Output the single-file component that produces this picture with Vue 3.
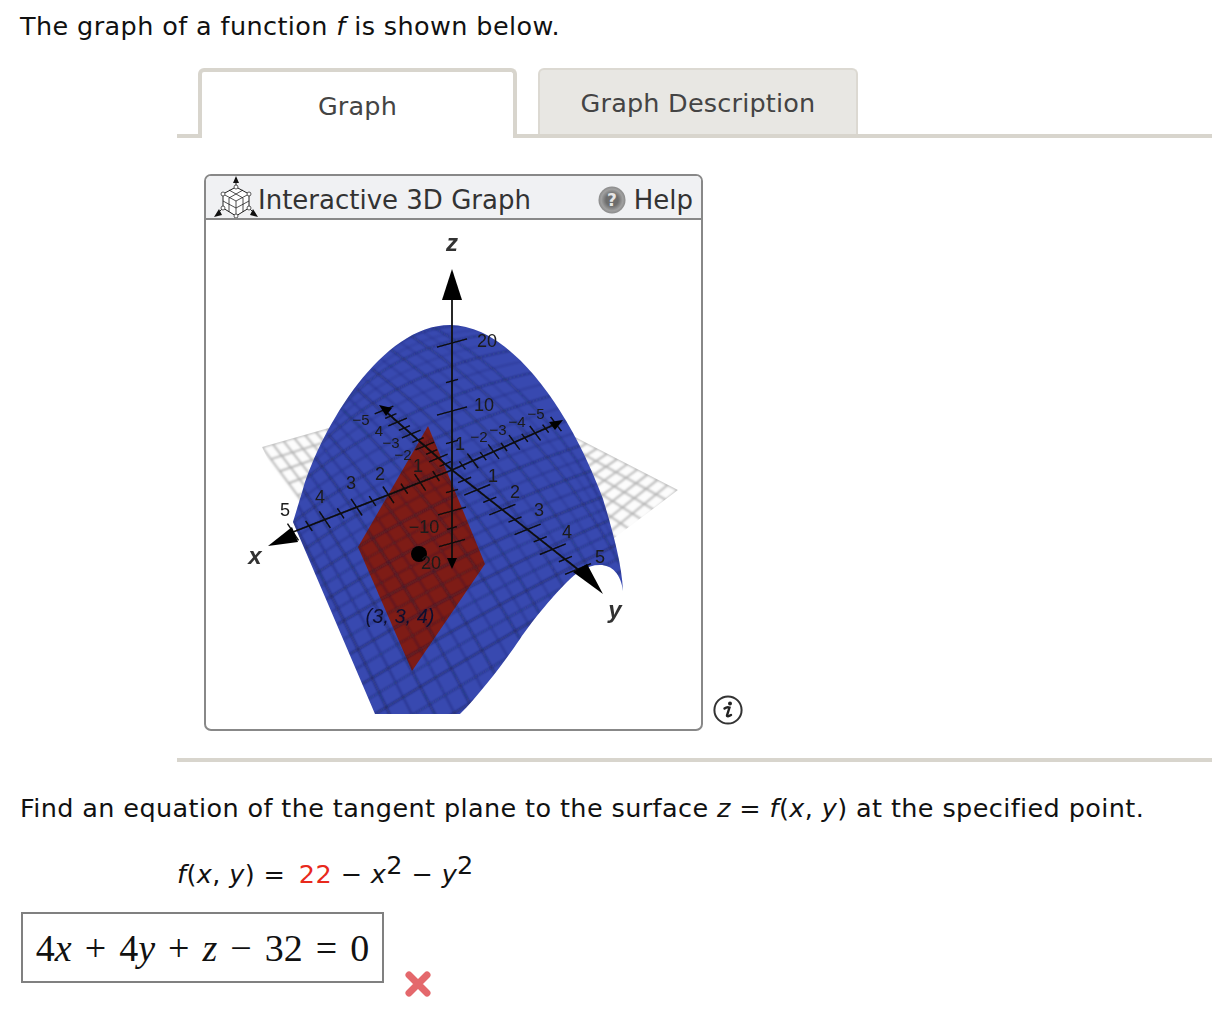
<script setup>
// hand-fitted mesh: each line is a quadratic from one contour point to another
const risingStarts = [[350, 395], [335, 415], [320, 445], [305, 480], [293, 523], [305, 550], [315, 575], [327, 600], [338, 625], [350, 655], [362, 685], [375, 715], [395, 750]]
const risingEnds = [[470, 326], [495, 335], [520, 350], [540, 372], [557, 395], [572, 420], [585, 445], [596, 470], [605, 497], [612, 520], [618, 545], [622, 572], [625, 610]]
const fallingStarts = [[430, 326], [410, 336], [390, 350], [372, 370], [357, 390], [342, 410], [328, 435], [315, 458], [303, 490], [293, 523], [270, 530]]
const fallingEnds = [[612, 525], [620, 565], [590, 572], [565, 590], [540, 615], [520, 640], [495, 675], [470, 705], [445, 735], [415, 770], [375, 760]]

function curve(a, b, bx, by) {
  const cx = (a[0] + b[0]) / 2 + bx
  const cy = (a[1] + b[1]) / 2 + by
  return `M${a[0]} ${a[1]} Q${cx} ${cy} ${b[0]} ${b[1]}`
}

// put a second line halfway between each pair
function densify(points) {
  const out = []
  points.forEach((p, i) => {
    out.push(p)
    const next = points[i + 1]
    if (next) out.push([(p[0] + next[0]) / 2, (p[1] + next[1]) / 2])
  })
  return out
}

function family(starts, ends, bx, by) {
  const a = densify(starts)
  const b = densify(ends)
  return a.map((p, i) => {
    const n = i / (a.length - 1)
    const strong = i % 2 === 0 ? 0.36 : 0.14
    return { d: curve(p, b[i], bx * (1 - n), by * (1 - n)), o: strong + 0.22 * n }
  })
}

const surfaceGrid = [
  ...family(risingStarts, risingEnds, -22, -34),
  ...family(fallingStarts, fallingEnds, 34, -26),
]

// base plane, interpolated between its four corners
const corners = [[262, 448], [476, 387], [678, 491], [440, 690]]
function planePoint(u, v) {
  const [a, b, c, d] = corners
  return [0, 1].map(k =>
    (1 - u) * (1 - v) * a[k] + u * (1 - v) * b[k] + u * v * c[k] + (1 - u) * v * d[k]
  )
}
const planeGrid = []
for (let i = 0; i <= 20; i++) {
  const s = i / 20
  planeGrid.push([planePoint(s, 0), planePoint(s, 1)])
  planeGrid.push([planePoint(0, s), planePoint(1, s)])
}

function ticks(from, to, count, dir, major, minor) {
  const out = []
  for (let i = 1; i <= count; i++) {
    const s = i / count
    const px = from[0] + (to[0] - from[0]) * s
    const py = from[1] + (to[1] - from[1]) * s
    const len = i % 2 === 0 ? major : minor
    out.push({ x1: px - dir[0] * len, y1: py - dir[1] * len, x2: px + dir[0] * len, y2: py + dir[1] * len })
  }
  return out
}

const axisTicks = [
  ...ticks([452, 471], [293, 533], 10, [0.55, 0.83], 10, 6),
  ...ticks([452, 471], [384, 411], 10, [0.93, -0.38], 10, 6),
  ...ticks([452, 471], [556, 425], 10, [0.6, 0.8], 9, 5),
  ...ticks([452, 471], [578, 570], 10, [0.93, -0.38], 14, 7),
]

const zTicks = [
  { y: 344, r: 15 }, { y: 382, r: 6 }, { y: 412, r: 15 }, { y: 443, r: 6 },
  { y: 492, r: 6 }, { y: 512, r: 14 }, { y: 529, r: 5 }, { y: 544, r: 13 },
]

const labels = [
  { t: '5', x: 285, y: 517 }, { t: '4', x: 320, y: 504 }, { t: '3', x: 351, y: 490 },
  { t: '2', x: 380, y: 481 }, { t: '1', x: 418, y: 473 },
  { t: '1', x: 460, y: 451 },
  { t: '1', x: 493, y: 483 }, { t: '2', x: 515, y: 499 }, { t: '3', x: 539, y: 517 }, { t: '4', x: 567, y: 539 }, { t: '5', x: 600, y: 564 },
  { t: '20', x: 487, y: 348 }, { t: '10', x: 484, y: 412 }, { t: '−10', x: 424, y: 534 }, { t: '20', x: 431, y: 570 },
]

// the crowded ends of the negative axes
const tightLabels = [
  { t: '−5', x: 361, y: 426 }, { t: '4', x: 379, y: 437 }, { t: '−3', x: 391, y: 449 }, { t: '−2', x: 403, y: 461 },
  { t: '−2', x: 479, y: 443 }, { t: '−3', x: 498, y: 436 }, { t: '−4', x: 517, y: 428 }, { t: '−5', x: 536, y: 420 },
]
</script>

<template>
  <div class="page">
    <p class="intro">The graph of a function <i>f</i> is shown below.</p>

    <div class="panel">
      <div class="tabs">
        <div class="tab active">Graph</div>
        <div class="tab">Graph Description</div>
      </div>

      <div class="graph-row">
        <div class="graph-box">
          <div class="graph-head">
            <span class="head-title">
              <svg class="cube" viewBox="0 0 44 42" width="44" height="42">
                <g fill="none" stroke="#222" stroke-width="1">
                  <path d="M22 6 L22 11 M9 32 L5 36 M35 32 L39 36" />
                  <path d="M22 11 L35 18 L35 32 L22 40 L9 32 L9 18 Z" fill="#fff" />
                  <path d="M9 18 L22 25 L35 18 M22 25 L22 40 M15 14 L29 22 M29 14 L15 22 M15 22 L15 36 M29 22 L29 36 M9 25 L22 32 L35 25" stroke-width="0.8" />
                </g>
                <path d="M22 0 L25 7 L19 7 Z M0 41 L5 33 L8 39 Z M44 41 L39 33 L36 39 Z" fill="#111" />
                <g fill="#fff" stroke="#333" stroke-width="0.8">
                  <circle cx="22" cy="11" r="2" /><circle cx="9" cy="18" r="2" /><circle cx="35" cy="18" r="2" />
                  <circle cx="9" cy="32" r="2" /><circle cx="35" cy="32" r="2" /><circle cx="22" cy="40" r="2" />
                </g>
              </svg>
              Interactive 3D Graph
            </span>
            <span class="help">
              <svg viewBox="0 0 28 28" width="28" height="28">
                <defs>
                  <radialGradient id="helpFill" cx="0.5" cy="0.5" r="0.5">
                    <stop offset="0.45" stop-color="#6d6d6d" />
                    <stop offset="0.8" stop-color="#a0a0a0" />
                    <stop offset="1" stop-color="#8a8a8a" />
                  </radialGradient>
                </defs>
                <circle cx="14" cy="14" r="13.5" fill="url(#helpFill)" />
                <text x="14" y="20" text-anchor="middle" class="help-mark">?</text>
              </svg>
              Help
            </span>
          </div>

          <svg class="plot" viewBox="206 221 495 509" width="495" height="509">
            <defs>
              <clipPath id="surfaceClip">
                <path id="surfaceEdge" d="M293 523 L303 490 C322 428 382 326 450 326 C510 326 570 410 603 500 C612 530 622 565 623 592 C621 575 612 566 600 566 C586 566 576 574 567 583 C550 600 530 625 520 640 C505 662 480 695 460 715 L375 715 Z" />
              </clipPath>
              <clipPath id="planeClip">
                <polygon points="262,448 476,387 678,491 460,655 300,530" />
              </clipPath>
              <filter id="soft"><feGaussianBlur stdDeviation="0.9" /></filter>
              <filter id="softer"><feGaussianBlur stdDeviation="0.5" /></filter>
            </defs>

            <!-- base plane -->
            <g clip-path="url(#planeClip)">
              <g filter="url(#soft)">
                <polygon points="262,448 476,387 678,491 440,690" fill="#fcfcfc" />
                <line v-for="(l, i) in planeGrid" :key="i" :x1="l[0][0]" :y1="l[0][1]" :x2="l[1][0]" :y2="l[1][1]" stroke="#b4b4b4" stroke-width="2" />
              </g>
            </g>

            <!-- surface and tangent plane -->
            <g filter="url(#softer)">
              <use href="#surfaceEdge" fill="#3949b0" />
              <polygon points="428,427 485,565 412,672 358,548" fill="#7e1d16" />
            </g>
            <g clip-path="url(#surfaceClip)">
              <g filter="url(#soft)">
                <path v-for="(l, i) in surfaceGrid" :key="i" :d="l.d" fill="none" stroke="#141a40" :stroke-opacity="l.o" stroke-width="1.7" />
              </g>
            </g>

            <!-- axes -->
            <g filter="url(#softer)" stroke="#0a0a0a" stroke-width="1.8">
              <line x1="452" y1="298" x2="452" y2="560" />
              <line x1="293" y1="533" x2="452" y2="471" />
              <line x1="452" y1="471" x2="558" y2="424" />
              <line x1="384" y1="411" x2="452" y2="471" />
              <line x1="452" y1="471" x2="580" y2="572" />
              <line v-for="(t, i) in axisTicks" :key="i" :x1="t.x1" :y1="t.y1" :x2="t.x2" :y2="t.y2" stroke-width="1.4" />
              <line v-for="t in zTicks" :key="t.y" :x1="452 - t.r" :y1="t.y + t.r * 0.28" :x2="452 + t.r" :y2="t.y - t.r * 0.28" stroke-width="1.4" />
            </g>
            <g fill="#000" filter="url(#softer)">
              <polygon points="452,270 442,301 462,301" />
              <polygon points="452,570 447,559 457,559" />
              <polygon points="268,547 292,528 298,543" />
              <polygon points="603,595 573,573 587,565" />
              <polygon points="563,421 549,423 555,431" />
              <polygon points="379,406 392,409 386,417" />
              <circle cx="419" cy="555" r="8" />
            </g>

            <!-- labels -->
            <g class="plot-labels" filter="url(#softer)">
              <text v-for="(l, i) in labels" :key="i" :x="l.x" :y="l.y" text-anchor="middle">{{ l.t }}</text>
              <text v-for="(l, i) in tightLabels" :key="'t' + i" :x="l.x" :y="l.y" text-anchor="middle" class="tight">{{ l.t }}</text>
              <text x="400" y="624" text-anchor="middle" class="point-label">(3, 3, 4)</text>
              <text x="452" y="252" text-anchor="middle" class="axis-name">z</text>
              <text x="255" y="565" text-anchor="middle" class="axis-name">x</text>
              <text x="615" y="619" text-anchor="middle" class="axis-name">y</text>
            </g>
          </svg>
        </div>

        <svg class="info" viewBox="0 0 30 30" width="30" height="30">
          <circle cx="15" cy="15" r="13.6" fill="#fff" stroke="#333" stroke-width="2" />
          <circle cx="17" cy="8.6" r="2" fill="#222" />
          <path d="M11.5 13.5 Q14 11.5 16.5 12.5 L14 20.5 Q14 22.5 18 20" fill="none" stroke="#222" stroke-width="2.4" stroke-linecap="round" />
        </svg>
      </div>

      <div class="rule"></div>
    </div>

    <p class="question">Find an equation of the tangent plane to the surface <i>z</i> = <i>f</i>(<i>x</i>, <i>y</i>) at the specified point.</p>

    <p class="formula"><i>f</i>(<i>x</i>, <i>y</i>) = <span class="red">22</span> − <i>x</i><sup>2</sup> − <i>y</i><sup>2</sup></p>

    <div class="answer-row">
      <div class="answer"><span>4<i>x</i><span class="op">+</span>4<i>y</i><span class="op">+</span><i>z</i><span class="op">−</span>32<span class="op">=</span>0</span></div>
      <svg class="wrong" viewBox="0 0 28 28" width="28" height="28">
        <path d="M5 5 L23 23 M23 5 L5 23" stroke="#e4686c" stroke-width="7" stroke-linecap="round" />
      </svg>
    </div>
  </div>
</template>

<style scoped>
.page {
  width: 1212px;
  height: 1018px;
  overflow: hidden;
  box-sizing: border-box;
  padding: 11px 0 0 20px;
  font-family: "DejaVu Sans", Verdana, sans-serif;
  font-size: 25.5px;
  letter-spacing: 0.39px;
  color: #111;
  background: #fff;
}

p {
  margin: 0;
}

.intro {
  line-height: 30px;
}

.panel {
  margin: 27px 0 0 157px;
}

.tabs {
  display: flex;
  align-items: flex-end;
  gap: 21px;
  padding-left: 21px;
  border-bottom: 4px solid #d8d5cd;
  box-sizing: border-box;
  height: 70px;
}

.tab {
  box-sizing: border-box;
  width: 320px;
  height: 66px;
  padding-top: 2px;
  display: flex;
  align-items: center;
  justify-content: center;
  border: 2px solid #dcd9d2;
  border-bottom: 0;
  border-radius: 6px 6px 0 0;
  background: #e8e7e3;
  color: #444;
  letter-spacing: 0.2px;
}

.tab.active {
  width: 319px;
  height: 70px;
  margin-bottom: -4px;
  background: #fff;
  border: 4px solid #d8d5cd;
  border-bottom: 0;
}

.graph-row {
  display: flex;
  align-items: flex-end;
  gap: 10px;
  margin: 36px 0 0 27px;
}

.graph-box {
  box-sizing: border-box;
  width: 499px;
  height: 557px;
  border: 2px solid #888;
  border-radius: 7px;
  overflow: hidden;
}

.graph-head {
  box-sizing: border-box;
  height: 44px;
  padding: 6px 8px 0 8px;
  display: flex;
  align-items: center;
  justify-content: space-between;
  background: #f0f1f3;
  border-bottom: 2px solid #888;
  color: #333;
  font-size: 26px;
  letter-spacing: 0;
}

.head-title {
  display: flex;
  align-items: center;
  white-space: nowrap;
}

.cube {
  flex: none;
  margin-top: -6px;
}

.help {
  display: flex;
  align-items: center;
  gap: 8px;
}

.help-mark {
  font-family: "DejaVu Sans", sans-serif;
  font-size: 17px;
  font-weight: 700;
  fill: #e6e6e6;
}

.plot {
  display: block;
}

.plot-labels text {
  font-family: "Liberation Sans", Arial, sans-serif;
  font-size: 18px;
  letter-spacing: 0;
  fill: #1a1a1a;
}

.plot-labels .tight {
  font-size: 15px;
}

.plot-labels .point-label {
  font-style: italic;
  font-size: 20px;
  fill: #10102e;
}

.plot-labels .axis-name {
  font-style: italic;
  font-weight: 700;
  font-size: 24px;
  fill: #333;
}

.info {
  flex: none;
  margin-bottom: 6px;
}

.rule {
  height: 4px;
  margin-top: 27px;
  background: #d8d5cd;
}

.question {
  margin-top: 31px;
  line-height: 30px;
}

.formula {
  margin: 33px 0 0 157px;
  line-height: 36px;
}

.formula sup {
  font-size: 25.5px;
  line-height: 0;
}

.red {
  margin-left: 5px;
  color: #e8291c;
}

.answer-row {
  display: flex;
  align-items: flex-end;
  gap: 20px;
  margin-top: 20px;
  margin-left: 1px;
}

.answer {
  box-sizing: border-box;
  width: 363px;
  height: 71px;
  display: flex;
  align-items: center;
  justify-content: center;
  white-space: nowrap;
  border: 2px solid #808080;
  font-family: "Liberation Serif", "Times New Roman", serif;
  font-size: 38px;
  letter-spacing: 0;
  color: #111;
}

.op {
  margin: 0 13px;
}

.wrong {
  flex: none;
  margin-bottom: -15px;
}
</style>
